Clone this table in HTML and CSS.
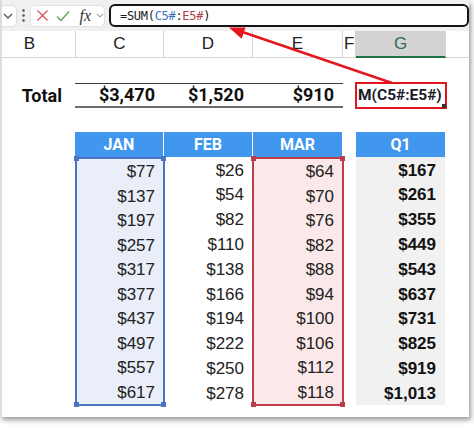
FILE: index.html
```html
<!DOCTYPE html>
<html>
<head>
<meta charset="utf-8">
<link rel="stylesheet" href="styles.css">
</head>
<body>
<div class="window">
  <div class="fbar">
    <div class="namebox">
      <svg width="10" height="6" viewBox="0 0 10 6"><path d="M1 1 L5 5 L9 1" fill="none" stroke="#555" stroke-width="1.3"/></svg>
    </div>
    <div class="dots">
      <svg width="3" height="13" viewBox="0 0 3 13"><circle cx="1.5" cy="1.5" r="1.3" fill="#555"/><circle cx="1.5" cy="6.5" r="1.3" fill="#555"/><circle cx="1.5" cy="11.5" r="1.3" fill="#555"/></svg>
    </div>
    <div class="fxbox">
      <svg class="ico-x" width="13" height="13" viewBox="0 0 13 13"><path d="M1.5 1.5 L11.5 11.5 M11.5 1.5 L1.5 11.5" stroke="#dc5a5a" stroke-width="1.4" fill="none"/></svg>
      <svg class="ico-ok" width="14" height="12" viewBox="0 0 14 12"><path d="M1 6.5 L5 10.5 L13 1.5" stroke="#5da55d" stroke-width="1.4" fill="none"/></svg>
      <span class="fx">fx</span>
      <svg class="ico-dd" width="8" height="5" viewBox="0 0 8 5"><path d="M1 1 L4 4 L7 1" fill="none" stroke="#aaa" stroke-width="1.1"/></svg>
    </div>
    <div class="formula"><span>=SUM(</span><span class="rb">C5#</span><span>:</span><span class="rr">E5#</span><span>)</span></div>
  </div>
  <div class="sheet">
    <div class="ch cb">B</div>
    <div class="ch">C</div>
    <div class="ch">D</div>
    <div class="ch">E</div>
    <div class="ch cf">F</div>
    <div class="ch cg">G</div>
    <div class="ch chh"></div>

    <div class="tlabel">Total</div>
    <div class="tval c2">$3,470</div>
    <div class="tval c3">$1,520</div>
    <div class="tval c4">$910</div>
    <div class="tform"><span>M(C5#:E5#)</span><i class="fill"></i></div>

    <div class="mh c2 first">JAN</div>
    <div class="mh c3">FEB</div>
    <div class="mh c4">MAR</div>
    <div class="mh c6">Q1</div>

    <div class="block c2 sel blue">
      <div class="v">$77</div><div class="v">$137</div><div class="v">$197</div><div class="v">$257</div><div class="v">$317</div>
      <div class="v">$377</div><div class="v">$437</div><div class="v">$497</div><div class="v">$557</div><div class="v">$617</div>
      <i class="hd tl"></i><i class="hd tr"></i><i class="hd bl"></i><i class="hd br"></i>
    </div>
    <div class="block c3">
      <div class="v">$26</div><div class="v">$54</div><div class="v">$82</div><div class="v">$110</div><div class="v">$138</div>
      <div class="v">$166</div><div class="v">$194</div><div class="v">$222</div><div class="v">$250</div><div class="v">$278</div>
    </div>
    <div class="block c4 sel red">
      <div class="v">$64</div><div class="v">$70</div><div class="v">$76</div><div class="v">$82</div><div class="v">$88</div>
      <div class="v">$94</div><div class="v">$100</div><div class="v">$106</div><div class="v">$112</div><div class="v">$118</div>
      <i class="hd tl"></i><i class="hd tr"></i><i class="hd bl"></i><i class="hd br"></i>
    </div>
    <div class="block c6 q1">
      <div class="v">$167</div><div class="v">$261</div><div class="v">$355</div><div class="v">$449</div><div class="v">$543</div>
      <div class="v">$637</div><div class="v">$731</div><div class="v">$825</div><div class="v">$919</div><div class="v">$1,013</div>
    </div>
  </div>
</div>
<svg class="arrow" width="474" height="428" viewBox="0 0 474 428">
  <line x1="392" y1="83" x2="241" y2="31.5" stroke="#e5171e" stroke-width="2.6"/>
  <polygon points="229,27.5 245.5,27.6 241.6,38.8" fill="#e5171e"/>
</svg>
</body>
</html>
```

FILE: styles.css
```css
* { box-sizing: border-box; margin: 0; padding: 0; }
body {
  margin: 0;
  background: #fff;
  width: 474px;
  height: 428px;
  overflow: hidden;
  position: relative;
  font-family: "Liberation Sans", Arial, sans-serif;
  color: #222;
}
.window {
  width: 469px;
  height: 417px;
  background: #fff;
  border-left: 2px solid #dcdcdc;
  box-shadow: 2px 3px 5px rgba(0, 0, 0, 0.4);
  overflow: hidden;
}
.fbar {
  height: 31px;
  background: #f0f0f0;
  display: flex;
  align-items: center;
}
.namebox {
  width: 20px;
  height: 22px;
  background: #fff;
  border: 1px solid #e0e0e0;
  border-left: none;
  border-radius: 0 5px 5px 0;
  display: flex;
  align-items: center;
  justify-content: flex-end;
  padding-right: 3px;
}
.dots {
  width: 21px;
  display: flex;
  justify-content: center;
  align-items: center;
}
.fxbox {
  width: 75px;
  height: 22px;
  background: #fff;
  border: 1px solid #e2e2e2;
  border-radius: 5px;
  display: flex;
  align-items: center;
  padding-left: 5px;
}
.ico-x { margin-right: 7px; }
.ico-ok { margin-right: 9px; }
.fx {
  font-family: "Liberation Serif", serif;
  font-style: italic;
  font-size: 16px;
  color: #333;
  margin-right: 5px;
  line-height: 1;
}
.formula {
  margin-left: 4px;
  width: 360px;
  flex: none;
  height: 23px;
  background: #fff;
  border: 2px solid #151515;
  border-radius: 6px;
  padding-left: 9px;
  display: flex;
  align-items: center;
  font-family: "DejaVu Sans Mono", monospace;
  font-size: 12px;
  letter-spacing: -0.3px;
  color: #1a1a1a;
}
.rb { color: #3a6fc4; }
.rr { color: #b2404c; }

.sheet {
  display: grid;
  grid-template-columns: 74px 88px 89px 90px 13px 90px 1fr;
  grid-template-rows: 27px repeat(14, 24.8px) 1fr;
  height: 386px;
}
.ch {
  grid-row: 1;
  display: flex;
  align-items: center;
  justify-content: center;
  font-size: 17px;
  color: #222;
  border-right: 1px solid #d6d6d6;
  border-bottom: 1px solid #d6d6d6;
  background: #fff;
}
.cb { padding-right: 18px; }
.cf { justify-content: flex-start; padding-left: 1px; }
.cg {
  background: #d3d3d3;
  color: #2c6b4a;
  border-bottom: 2px solid #1e7145;
}
.chh { border-right: none; }

.c2 { grid-column: 2; }
.c3 { grid-column: 3; }
.c4 { grid-column: 4; }
.c6 { grid-column: 6; }

.tlabel {
  grid-row: 3;
  grid-column: 1;
  display: flex;
  align-items: center;
  justify-content: flex-end;
  padding-right: 14px;
  font-family: Roboto, "Liberation Sans", sans-serif;
  font-weight: bold;
  font-size: 18px;
  color: #111;
}
.tval {
  grid-row: 3;
  border-top: 1px solid #3a3a3a;
  border-bottom: 2px solid #6b6b6b;
  display: flex;
  align-items: center;
  justify-content: flex-end;
  padding-right: 9px;
  font-family: Roboto, "Liberation Sans", sans-serif;
  font-weight: bold;
  font-size: 18px;
  color: #111;
}
.tval.c2 { margin-left: -1px; }
.tform {
  grid-row: 3;
  grid-column: 6;
  margin: -1px;
  border: 2px solid #e3151c;
  display: flex;
  align-items: center;
  justify-content: flex-start;
  padding-left: 1px;
  white-space: nowrap;
  position: relative;
  font-family: Roboto, "Liberation Sans", sans-serif;
  font-weight: bold;
  font-size: 15.5px;
  color: #1a1a2a;
}
.fill {
  position: absolute;
  right: -1px;
  bottom: -1px;
  width: 4px;
  height: 4px;
  background: #333;
}

.mh {
  grid-row: 5;
  background: #4196ee;
  color: #fff;
  display: flex;
  align-items: center;
  justify-content: center;
  font-family: Roboto, "Liberation Sans", sans-serif;
  font-weight: bold;
  font-size: 16px;
  margin-right: 1px;
}
.mh.first { margin-left: -1px; }

.block {
  grid-row: 6 / span 10;
  display: flex;
  flex-direction: column;
  position: relative;
}
.v {
  flex: 1;
  display: flex;
  align-items: center;
  justify-content: flex-end;
  padding-right: 9px;
  padding-top: 2px;
  font-size: 17px;
  color: #222;
}
.sel {
  margin: 0 -1px -1px -1px;
  border: 2px solid;
}
.sel .v { padding-right: 8px; }
.blue { border-color: #4a75c2; background: #e9eef8; }
.red { border-color: #bd3c4b; background: #fbe9ea; }
.q1 { background: #f1f1f1; margin-right: 1px; }
.q1 .v { font-weight: bold; color: #111; }

.hd {
  position: absolute;
  width: 5px;
  height: 5px;
}
.blue .hd { background: #4a75c2; }
.red .hd { background: #bd3c4b; }
.tl { top: -3px; left: -3px; }
.tr { top: -3px; right: -3px; }
.bl { bottom: -3px; left: -3px; }
.br { bottom: -3px; right: -3px; }

.arrow {
  position: absolute;
  top: 0;
  left: 0;
  pointer-events: none;
}
```
